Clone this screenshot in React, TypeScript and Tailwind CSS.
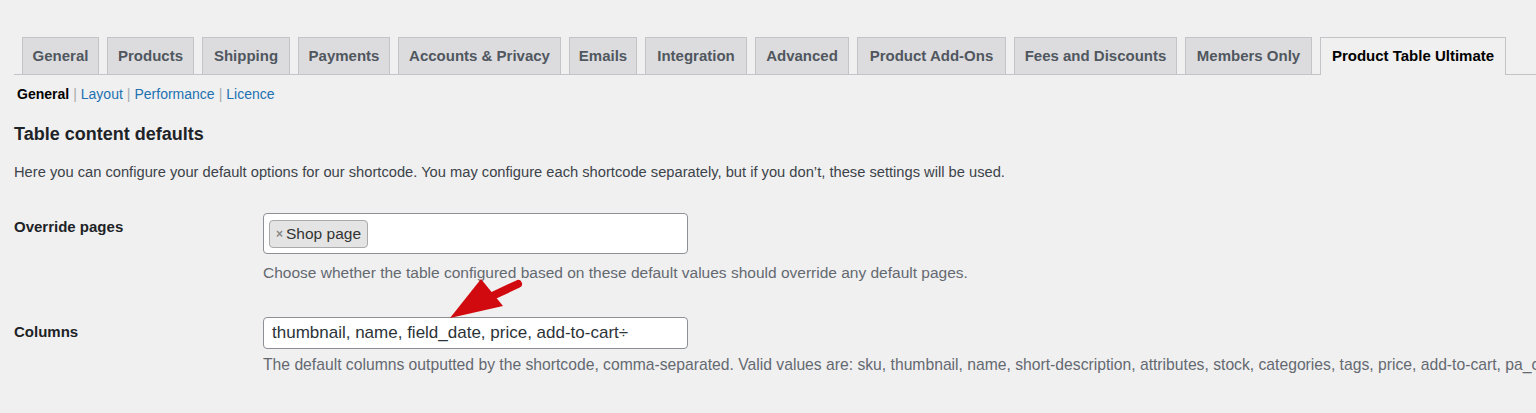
import React from "react";

const tabs: { label: string; cls: string }[] = [
  { label: "General", cls: "w-[77px]" },
  { label: "Products", cls: "w-[87px]" },
  { label: "Shipping", cls: "w-[88px]" },
  { label: "Payments", cls: "w-[92px]" },
  { label: "Accounts & Privacy", cls: "w-[163px]" },
  { label: "Emails", cls: "w-[68px]" },
  { label: "Integration", cls: "w-[102px]" },
  { label: "Advanced", cls: "w-[94px]" },
  { label: "Product Add-Ons", cls: "w-[149px]" },
  { label: "Fees and Discounts", cls: "w-[163px]" },
  { label: "Members Only", cls: "w-[127px]" },
];

export default function App() {
  return (
    <div className="relative w-[1536px] h-[413px] overflow-hidden bg-[#f0f0f0] text-[#1d2327] font-['Liberation_Sans',Arial,sans-serif]">
      {/* Tabs */}
      <div className="ml-[14px] pt-[37px] flex items-end gap-[8px] pl-[8px] border-b border-[#c3c4c7]">
        {tabs.map((t) => (
          <div
            key={t.label}
            className={`${t.cls} h-[37px] flex items-center justify-center border border-b-0 border-[#c3c4c7] bg-[#dcdcde] text-[#50575e] text-[15px] font-semibold whitespace-nowrap`}
          >
            {t.label}
          </div>
        ))}
        <div className="w-[186px] h-[38px] -mb-px flex items-center justify-center border border-b-0 border-[#c3c4c7] bg-[#f0f0f0] text-[#000] text-[15px] font-semibold whitespace-nowrap">
          Product Table Ultimate
        </div>
      </div>

      {/* Sub navigation */}
      <div className="ml-[17px] mt-[9px] h-[20px] flex items-center text-[14px] leading-[20px] whitespace-nowrap">
        <span className="font-semibold text-[#000]">General</span>
        <span className="mx-[4px] text-[#a7aaad]">|</span>
        <span className="text-[#2271b1]">Layout</span>
        <span className="mx-[4px] text-[#a7aaad]">|</span>
        <span className="text-[#2271b1]">Performance</span>
        <span className="mx-[4px] text-[#a7aaad]">|</span>
        <span className="text-[#2271b1]">Licence</span>
      </div>

      <h2 className="ml-[14px] mt-[18px] h-[24px] text-[18px] leading-[24px] font-semibold text-[#1d2327]">
        Table content defaults
      </h2>

      <p className="ml-[14px] mt-[16px] h-[20px] text-[14.7px] leading-[20px] text-[#3c434a] whitespace-nowrap">
        Here you can configure your default options for our shortcode. You may configure each shortcode separately, but if you don’t, these settings will be used.
      </p>

      {/* Override pages */}
      <div className="mt-[31px] ml-[14px] grid grid-cols-[249px_1fr]">
        <div className="pt-[4px] text-[15px] leading-[20px] font-semibold text-[#1d2327]">Override pages</div>
        <div>
          <div className="w-[425px] h-[41px] bg-white border border-[#8c8f94] rounded-[4px] flex items-center px-[5px]">
            <div className="h-[28px] px-[6px] flex items-center gap-[3px] bg-[#e4e4e4] border border-[#aaaaaa] rounded-[4px] text-[15.5px] text-[#333]">
              <span className="text-[12px] text-[#888] font-bold">×</span>
              <span>Shop page</span>
            </div>
          </div>
          <p className="mt-[9px] h-[20px] text-[15.5px] leading-[20px] text-[#646970] whitespace-nowrap">
            Choose whether the table configured based on these default values should override any default pages.
          </p>
        </div>
      </div>

      {/* Columns */}
      <div className="mt-[34px] ml-[14px] grid grid-cols-[249px_1fr]">
        <div className="pt-[5px] text-[15px] leading-[20px] font-semibold text-[#1d2327]">Columns</div>
        <div>
          <div className="w-[425px] h-[32px] bg-white border border-[#8c8f94] rounded-[4px] flex items-center px-[8px] text-[17px] text-[#2c3338] whitespace-nowrap">
            thumbnail, name, field_date, price, add-to-cart÷
          </div>
          <p className="mt-[6px] h-[20px] text-[15.7px] leading-[20px] text-[#646970] whitespace-nowrap">
            The default columns outputted by the shortcode, comma-separated. Valid values are: sku, thumbnail, name, short-description, attributes, stock, categories, tags, price, add-to-cart, pa_color
          </p>
        </div>
      </div>

      {/* Red arrow annotation */}
      <svg className="absolute left-0 top-0 pointer-events-none" width="1536" height="413" viewBox="0 0 1536 413">
        <line x1="518" y1="284" x2="488" y2="298" stroke="#d10a10" strokeWidth="8" strokeLinecap="round" />
        <polygon points="450,318 481,279 503,306" fill="#d10a10" />
      </svg>
    </div>
  );
}
